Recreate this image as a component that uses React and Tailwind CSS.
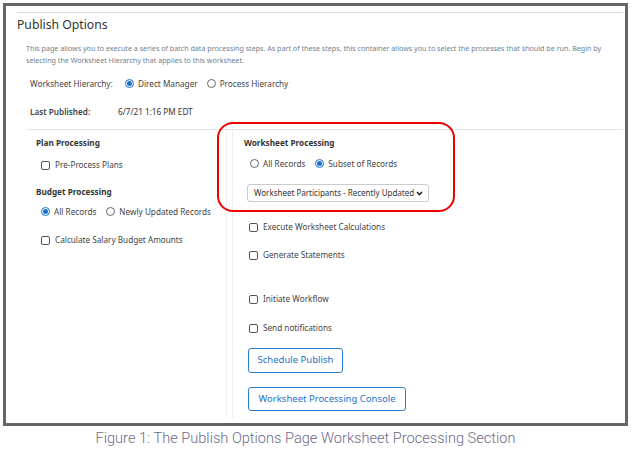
import React from 'react'

const ui = { fontFamily: '"Segoe UI", "Noto Sans", "Open Sans", sans-serif' }

function Radio({ checked }) {
  return checked ? (
    <span className="flex h-[9px] w-[9px] shrink-0 items-center justify-center rounded-full border border-[#1a6fd1]">
      <span className="h-[5px] w-[5px] rounded-full bg-[#1a6fd1]" />
    </span>
  ) : (
    <span className="h-[9px] w-[9px] shrink-0 rounded-full border border-[#666]" />
  )
}

function Check({ label, className = '' }) {
  return (
    <div className={`flex h-[14px] items-center ${className}`}>
      <span className="h-[9px] w-[9px] shrink-0 rounded-[2px] border border-[#555]" />
      <span className="ml-[5px] whitespace-nowrap text-[8.2px] text-[#444]">{label}</span>
    </div>
  )
}

function Choice({ checked, label }) {
  return (
    <div className="flex items-center">
      <Radio checked={checked} />
      <span className="ml-[4px] whitespace-nowrap text-[8.2px] text-[#444]">{label}</span>
    </div>
  )
}

export default function App() {
  return (
    <div className="relative h-[453px] w-[634px] bg-white" style={ui}>
      <div className="ml-[3px] pt-[3px]">
        <div className="h-[423px] w-[625px] border-[3px] border-[#666] pt-[6px] pl-[11px] pr-[2px]">
          <div className="border-t border-[#ddd]">
            <div className="flex h-[24px] items-center text-[12.2px] text-[#333]">Publish Options</div>

            <p className="mt-[5px] whitespace-nowrap pl-[9px] text-[7.15px] leading-[12px] text-[#6f7f90]">
              This page allows you to execute a series of batch data processing steps. As part of these steps, this container allows you to select the processes that should be run. Begin by
              <br />
              selecting the Worksheet Hierarchy that applies to this worksheet.
            </p>

            <div className="mt-[10px] flex h-[16px] items-center pl-[13px] text-[8.2px] text-[#444]">
              <span className="w-[95px]">Worksheet Hierarchy:</span>
              <Choice checked label="Direct Manager" />
              <span className="ml-[9px]"><Choice label="Process Hierarchy" /></span>
            </div>

            <div className="mt-[12px] flex h-[16px] items-center pl-[13px] text-[8.2px]">
              <span className="w-[88px] font-semibold text-[#444]">Last Published:</span>
              <span className="text-[#333]">6/7/21 1:16 PM EDT</span>
            </div>

            <div className="ml-[10px] mt-[9px] flex border-t border-[#e5e5e5]">
              <div className="w-[200px] border-r border-[#eee] pl-[9px] pt-[6px]">
                <div className="flex h-[14px] items-center text-[8.2px] font-bold text-[#333]">Plan Processing</div>
                <Check className="mt-[8px] ml-[5px]" label="Pre-Process Plans" />
                <div className="mt-[13px] flex h-[14px] items-center text-[8.2px] font-bold text-[#333]">Budget Processing</div>
                <div className="mt-[6px] ml-[5px] flex h-[14px] items-center gap-[10px]">
                  <Choice checked label="All Records" />
                  <Choice label="Newly Updated Records" />
                </div>
                <Check className="mt-[14px] ml-[5px]" label="Calculate Salary Budget Amounts" />
              </div>

              <div className="ml-[5px] h-[288px] flex-1 border-l border-[#eee] pl-[11px] pt-[6px]">
                <div className="flex h-[14px] items-center text-[8.2px] font-bold text-[#333]">Worksheet Processing</div>
                <div className="ml-[6px] mt-[7px] flex h-[14px] items-center gap-[10px]">
                  <Choice label="All Records" />
                  <Choice checked label="Subset of Records" />
                </div>
                <div className="ml-[3px] mt-[13px] flex h-[18px] w-[182px] items-center justify-between rounded-[3px] border border-[#ccc] pl-[6px] pr-[5px] text-[8px] text-[#333]">
                  <span className="whitespace-nowrap">Worksheet Participants - Recently Updated</span>
                  <svg width="7" height="5" viewBox="0 0 7 5" className="shrink-0">
                    <path d="M1 1l2.5 2.5L6 1" fill="none" stroke="#222" strokeWidth="1.6" />
                  </svg>
                </div>
                <Check className="ml-[5px] mt-[18px]" label="Execute Worksheet Calculations" />
                <Check className="ml-[5px] mt-[14px]" label="Generate Statements" />
                <Check className="ml-[5px] mt-[30px]" label="Initiate Workflow" />
                <Check className="ml-[5px] mt-[15px]" label="Send notifications" />
                <button className="ml-[4px] mt-[13px] flex h-[25px] w-[95px] items-center justify-center rounded-[3px] border border-[#2b7bd0] text-[9.5px] text-[#1f6fc6]">
                  Schedule Publish
                </button>
                <button className="ml-[4px] mt-[14px] flex h-[24px] w-[158px] items-center justify-center rounded-[3px] border border-[#2b7bd0] text-[9.5px] text-[#1f6fc6]">
                  Worksheet Processing Console
                </button>
              </div>
            </div>
          </div>
        </div>
      </div>

      <div className="mt-[2px] pr-[23px] text-center text-[14.6px] font-light text-[#6e6a8c]" style={{ fontFamily: 'Roboto, sans-serif' }}>
        Figure 1: The Publish Options Page Worksheet Processing Section
      </div>

      <div className="absolute left-[217px] top-[122px] h-[90px] w-[238px] rounded-[16px] border-2 border-[#ee0000]" />
    </div>
  )
}
